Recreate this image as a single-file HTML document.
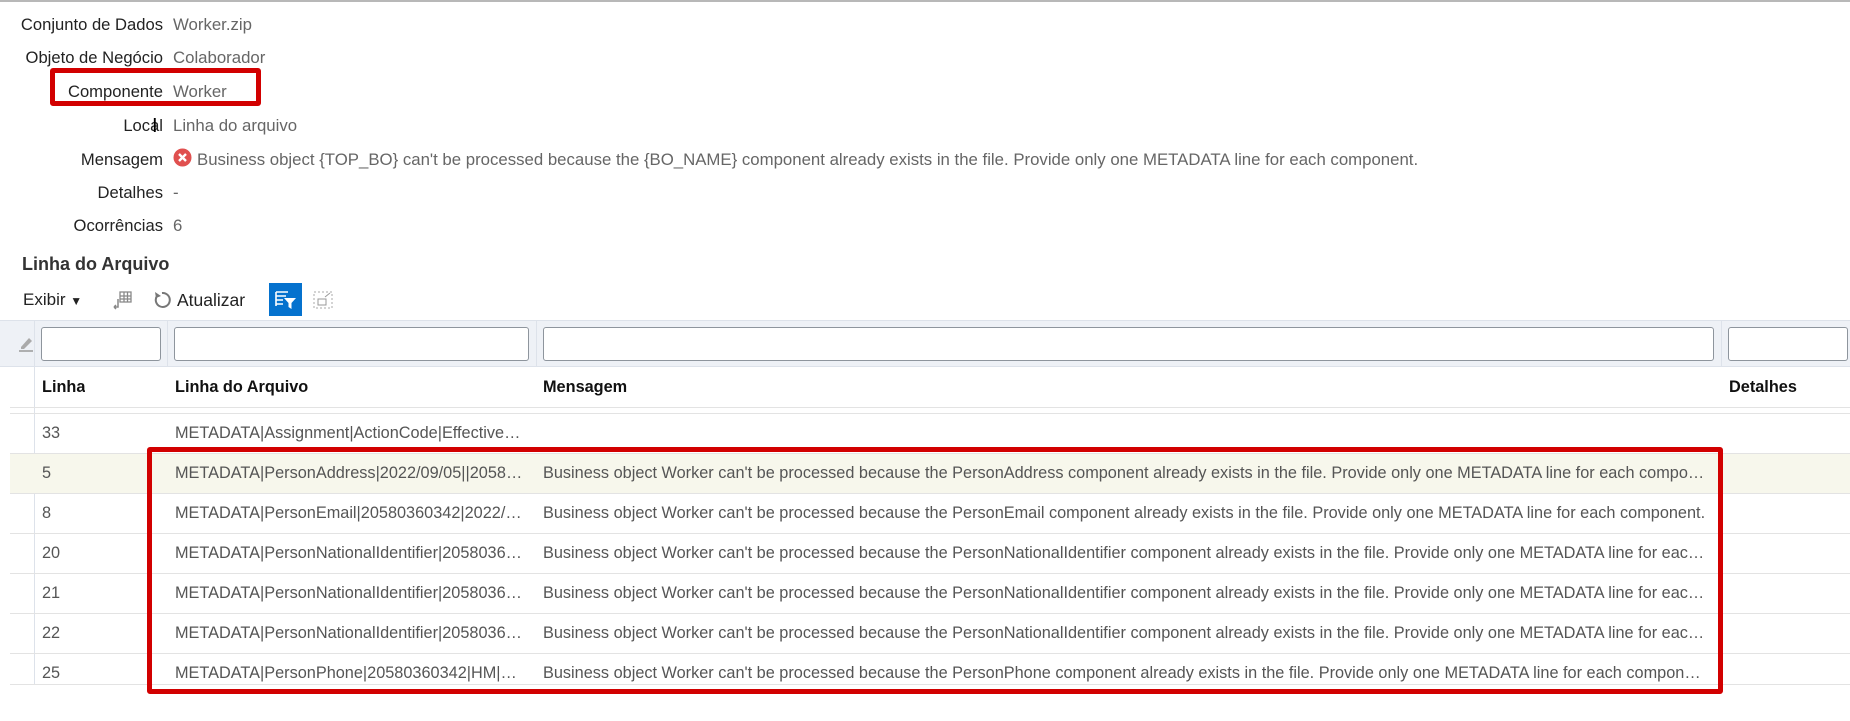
<!DOCTYPE html>
<html><head><meta charset="utf-8"><style>
*{margin:0;padding:0;box-sizing:border-box}
body{width:1850px;height:721px;background:#fff;position:relative;overflow:hidden;font-family:"Liberation Sans",Arial,sans-serif}
.top{position:absolute;left:0;top:0;width:1850px;height:2px;background:#b8b8b8}
.lbl{position:absolute;width:163px;left:0;text-align:right;font-size:16.6px;color:#222;line-height:20px}
.val{position:absolute;left:173px;font-size:16.8px;color:#666;line-height:20px;white-space:nowrap}
.abs{position:absolute}
.rbox{position:absolute;border:5px solid #d20000;border-radius:3px}
.t{position:absolute;font-size:16.3px;font-family:Arial,"Liberation Sans",sans-serif;white-space:nowrap;overflow:hidden;text-overflow:ellipsis;line-height:20px}
.hl{position:absolute;left:10px;width:1840px;height:1px;background:#e3e3e3}
.inp{position:absolute;top:327px;height:34px;border:1px solid #8e959d;border-radius:3px;background:#fff}
</style></head><body>
<div class="top"></div>

<div class="lbl" style="top:15px">Conjunto de Dados</div><div class="val" style="top:15px">Worker.zip</div>
<div class="lbl" style="top:48px">Objeto de Negócio</div><div class="val" style="top:48px">Colaborador</div>
<div class="lbl" style="top:82px">Componente</div><div class="val" style="top:82px">Worker</div>
<div class="lbl" style="top:116px">Local</div><div class="val" style="top:116px">Linha do arquivo</div>
<div class="lbl" style="top:150px">Mensagem</div>
<svg class="abs" style="left:173px;top:148px" width="19" height="19" viewBox="0 0 19 19"><circle cx="9.5" cy="9.5" r="9" fill="#e0504f"/><path d="M6 6L13 13M13 6L6 13" stroke="#fff" stroke-width="2.4"/></svg>
<div class="val" style="top:150px;left:197px">Business object {TOP_BO} can't be processed because the {BO_NAME} component already exists in the file. Provide only one METADATA line for each component.</div>
<div class="lbl" style="top:183px">Detalhes</div><div class="val" style="top:183px">-</div>
<div class="lbl" style="top:216px">Ocorrências</div><div class="val" style="top:216px">6</div>
<div class="rbox" style="left:50px;top:68px;width:211px;height:38px"></div>
<div class="abs" style="left:152px;top:116px;font-size:20px;line-height:20px">I</div>

<div class="abs" style="left:22px;top:254px;font-size:18px;font-weight:bold;color:#333">Linha do Arquivo</div>

<div class="abs" style="left:23px;top:290px;font-size:17px;color:#222">Exibir <span style="font-size:12px">▼</span></div>
<svg class="abs" style="left:113px;top:290px" width="20" height="20" viewBox="0 0 20 20"><path d="M7 2h11v10H7zM7 6h11M7 9h11M11 2v10M14.5 2v10" stroke="#888" fill="none" stroke-width="1.3"/><path d="M5 9v8H1M1 17l2-2M1 17l2 2" stroke="#888" fill="none" stroke-width="1.5"/></svg>
<svg class="abs" style="left:153px;top:291px" width="18" height="18" viewBox="0 0 18 18"><path d="M4 5A7 7 0 1 0 9 2" stroke="#777" stroke-width="2" fill="none"/><path d="M2 1l1 6 5-2z" fill="#777"/></svg>
<div class="abs" style="left:177px;top:290px;font-size:17.5px;color:#222">Atualizar</div>
<div class="abs" style="left:269px;top:283px;width:33px;height:33px;background:#0572ce"></div>
<svg class="abs" style="left:275px;top:290px" width="22" height="20" viewBox="0 0 22 20"><path d="M1 2h12M1 6h10M1 10h7M1 14h7M1 2v14" stroke="#fff" stroke-width="1.6" fill="none"/><path d="M9 8h12l-4.5 5v6l-3-2v-4z" fill="#fff"/></svg>
<svg class="abs" style="left:313px;top:291px" width="20" height="18" viewBox="0 0 20 18"><rect x="1" y="1" width="18" height="16" stroke="#aaa" stroke-dasharray="2 2" fill="none"/><rect x="5" y="8" width="8" height="6" stroke="#999" fill="none"/><path d="M12 6l5-4" stroke="#999"/></svg>

<div class="abs" style="left:0;top:320px;width:1850px;height:47px;background:#eef1f6;border-top:1px solid #dde2ea;border-bottom:1px solid #dde2ea"></div>
<div class="abs" style="left:34px;top:320px;width:1px;height:364px;background:#dde2ea"></div>
<div class="abs" style="left:167px;top:320px;width:1px;height:47px;background:#dde2ea"></div>
<div class="abs" style="left:536px;top:320px;width:1px;height:47px;background:#dde2ea"></div>
<div class="abs" style="left:1721px;top:320px;width:1px;height:47px;background:#dde2ea"></div>
<svg class="abs" style="left:18px;top:335px" width="16" height="17" viewBox="0 0 16 17"><path d="M3 12L11 3l3 3-8 8H3z" fill="#aaa"/><path d="M1 16h14" stroke="#999" stroke-width="1.5"/></svg>
<div class="inp" style="left:41px;width:120px"></div>
<div class="inp" style="left:174px;width:355px"></div>
<div class="inp" style="left:543px;width:1171px"></div>
<div class="inp" style="left:1728px;width:120px"></div>

<div class="t" style="left:42px;top:377px;font-weight:bold;color:#111">Linha</div>
<div class="t" style="left:175px;top:377px;font-weight:bold;color:#111">Linha do Arquivo</div>
<div class="t" style="left:543px;top:377px;font-weight:bold;color:#111">Mensagem</div>
<div class="t" style="left:1729px;top:377px;font-weight:bold;color:#111">Detalhes</div>
<div class="hl" style="top:407px"></div>
<div class="hl" style="top:413px"></div>

<div class="abs" style="left:10px;top:453px;width:1840px;height:40px;background:#f7f7ec"></div>
<div class="hl" style="top:453px"></div><div class="hl" style="top:493px"></div><div class="hl" style="top:533px"></div><div class="hl" style="top:573px"></div><div class="hl" style="top:613px"></div><div class="hl" style="top:653px"></div><div class="hl" style="top:684px"></div>

<div style="color:#555">
<div class="t" style="left:42px;top:423px">33</div>
<div class="t" style="left:175px;top:423px;width:350px">METADATA|Assignment|ActionCode|EffectiveStartDate</div>

<div class="t" style="left:42px;top:463px">5</div>
<div class="t" style="left:175px;top:463px;width:350px">METADATA|PersonAddress|2022/09/05||20580360342</div>
<div class="t" style="left:543px;top:463px;width:1165px">Business object Worker can't be processed because the PersonAddress component already exists in the file. Provide only one METADATA line for each component.</div>

<div class="t" style="left:42px;top:503px">8</div>
<div class="t" style="left:175px;top:503px;width:350px">METADATA|PersonEmail|20580360342|2022/09/05</div>
<div class="t" style="left:543px;top:503px;width:1165px">Business object Worker can't be processed because the PersonEmail component already exists in the file. Provide only one METADATA line for each component.</div>

<div class="t" style="left:42px;top:543px">20</div>
<div class="t" style="left:175px;top:543px;width:350px">METADATA|PersonNationalIdentifier|20580360342</div>
<div class="t" style="left:543px;top:543px;width:1165px">Business object Worker can't be processed because the PersonNationalIdentifier component already exists in the file. Provide only one METADATA line for each component.</div>

<div class="t" style="left:42px;top:583px">21</div>
<div class="t" style="left:175px;top:583px;width:350px">METADATA|PersonNationalIdentifier|20580360342</div>
<div class="t" style="left:543px;top:583px;width:1165px">Business object Worker can't be processed because the PersonNationalIdentifier component already exists in the file. Provide only one METADATA line for each component.</div>

<div class="t" style="left:42px;top:623px">22</div>
<div class="t" style="left:175px;top:623px;width:350px">METADATA|PersonNationalIdentifier|20580360342</div>
<div class="t" style="left:543px;top:623px;width:1165px">Business object Worker can't be processed because the PersonNationalIdentifier component already exists in the file. Provide only one METADATA line for each component.</div>

<div class="t" style="left:42px;top:663px">25</div>
<div class="t" style="left:175px;top:663px;width:350px">METADATA|PersonPhone|20580360342|HM|2022</div>
<div class="t" style="left:543px;top:663px;width:1165px">Business object Worker can't be processed because the PersonPhone component already exists in the file. Provide only one METADATA line for each component.</div>
</div>

<div class="rbox" style="left:147px;top:447px;width:1576px;height:247px"></div>
</body></html>
